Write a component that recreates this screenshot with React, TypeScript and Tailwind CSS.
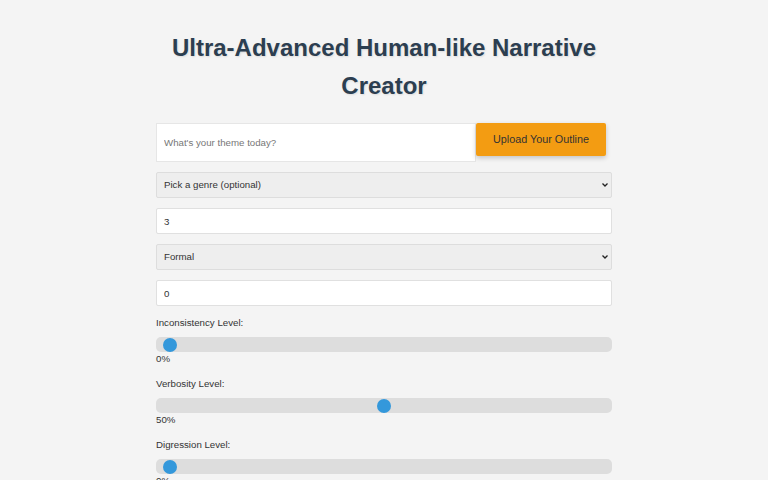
import React from 'react';

const sliders = [
  { label: 'Inconsistency Level:', value: 0 },
  { label: 'Verbosity Level:', value: 50 },
  { label: 'Digression Level:', value: 0 },
];

function Slider({ label, value }: { label: string; value: number }) {
  return (
    <div className="flex flex-col">
      <label className="text-[9.7px] leading-[14px] text-[#333] mb-[7px]">{label}</label>
      <div className="h-[15px] rounded-[5px] bg-[#dddddd] px-[14px]">
        <div className="relative w-full h-full">
          <span
            className="absolute top-1/2 -translate-x-1/2 -translate-y-1/2 w-[14px] h-[14px] rounded-full bg-[#3498db]"
            style={{ left: `${value}%` }}
          />
        </div>
      </div>
      <div className="text-[9.7px] leading-[14px] text-[#333] mb-[11px]">{value}%</div>
    </div>
  );
}

function Select({ value }: { value: string }) {
  return (
    <div className="relative h-[26px]">
      <select className="block w-full h-[26px] appearance-none bg-[#eeeeee] border border-[#dddddd] px-[7px] text-[9.7px] text-[#333] rounded-[2px] outline-none">
        <option>{value}</option>
      </select>
      <svg
        className="absolute right-[4px] top-1/2 -translate-y-1/2 pointer-events-none"
        width="6"
        height="4"
        viewBox="0 0 6 4"
      >
        <path d="M0.5 0.5 L3 3 L5.5 0.5" fill="none" stroke="#222" strokeWidth="1.3" />
      </svg>
    </div>
  );
}

export default function App() {
  return (
    <div className="min-h-screen bg-[#f4f4f4] font-['Liberation_Sans',Arial,sans-serif] pt-[29px]">
      <div className="w-[456px] mx-auto">
        <h1 className="text-center text-[24px] leading-[38px] font-bold text-[#2c3e50] [text-shadow:1px_1px_2px_rgba(0,0,0,0.1)] mb-[18px]">
          Ultra-Advanced Human-like Narrative Creator
        </h1>

        <div className="flex items-start">
          <input
            type="text"
            placeholder="What's your theme today?"
            className="flex-1 h-[39px] bg-white border border-[#e6e6e6] px-[7px] text-[9.7px] text-[#333] placeholder:text-[#777] outline-none"
          />
          <button className="w-[130px] h-[33px] mr-[6px] bg-[#f39c12] text-[#333] text-[10.8px] rounded-[2px] shadow-[0_2px_5px_rgba(0,0,0,0.2)]">
            Upload Your Outline
          </button>
        </div>

        <div className="flex flex-col gap-[10px] mt-[10px] mb-[10px]">
          <Select value="Pick a genre (optional)" />
          <input
            type="number"
            defaultValue={3}
            className="h-[26px] bg-white border border-[#e0e0e0] px-[7px] text-[9.7px] text-[#333] rounded-[2px] outline-none"
          />
          <Select value="Formal" />
          <input
            type="number"
            defaultValue={0}
            className="h-[26px] bg-white border border-[#e0e0e0] px-[7px] text-[9.7px] text-[#333] rounded-[2px] outline-none"
          />
        </div>

        {sliders.map((s) => (
          <Slider key={s.label} label={s.label} value={s.value} />
        ))}
      </div>
    </div>
  );
}
